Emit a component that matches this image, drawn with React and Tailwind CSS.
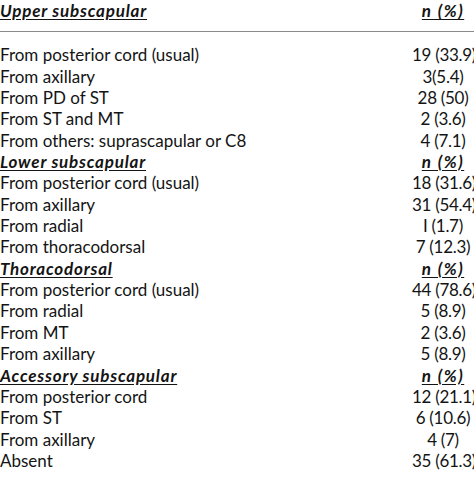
const sections = [
  {
    title: 'Upper subscapular',
    rows: [
      ['From posterior cord (usual)', '19 (33.9)'],
      ['From axillary', '3(5.4)'],
      ['From PD of ST', '28 (50)'],
      ['From ST and MT', '2 (3.6)'],
      ['From others: suprascapular or C8', '4 (7.1)'],
    ],
  },
  {
    title: 'Lower subscapular',
    rows: [
      ['From posterior cord (usual)', '18 (31.6)'],
      ['From axillary', '31 (54.4)'],
      ['From radial', 'I (1.7)'],
      ['From thoracodorsal', '7 (12.3)'],
    ],
  },
  {
    title: 'Thoracodorsal',
    rows: [
      ['From posterior cord (usual)', '44 (78.6)'],
      ['From radial', '5 (8.9)'],
      ['From MT', '2 (3.6)'],
      ['From axillary', '5 (8.9)'],
    ],
  },
  {
    title: 'Accessory subscapular',
    rows: [
      ['From posterior cord', '12 (21.1)'],
      ['From ST', '6 (10.6)'],
      ['From axillary', '4 (7)'],
      ['Absent', '35 (61.3)'],
    ],
  },
];

function Row({ label, value, head }) {
  const h = head ? 'font-bold italic underline underline-offset-2 tracking-[0.8px]' : '';
  return (
    <div className="flex h-[21.37px] items-center leading-none">
      <div className={`flex-1 whitespace-nowrap ${h}`}>{label}</div>
      <div
        className={`w-[62px] text-center whitespace-nowrap ${
          head ? 'font-bold italic underline underline-offset-2 tracking-[1.5px]' : 'tracking-[-0.3px]'
        }`}
      >
        {value}
      </div>
    </div>
  );
}

export default function App() {
  return (
    <div
      className="w-[474px] h-[477px] overflow-hidden bg-white text-[#141414] text-[17px]"
      style={{ fontFamily: 'Lato, "Open Sans", sans-serif' }}
    >
      {/* header */}
      <div className="h-[17px]">
        <Row label={sections[0].title} value="n (%)" head />
      </div>
      <div className="mt-[14px] border-t border-[#8a8a8a]" />
      <div className="pt-[12px]">
        {sections.map((s, i) => (
          <div key={s.title}>
            {i > 0 && <Row label={s.title} value="n (%)" head />}
            {s.rows.map(([l, v]) => (
              <Row key={l + v} label={l} value={v} />
            ))}
          </div>
        ))}
      </div>
    </div>
  );
}
